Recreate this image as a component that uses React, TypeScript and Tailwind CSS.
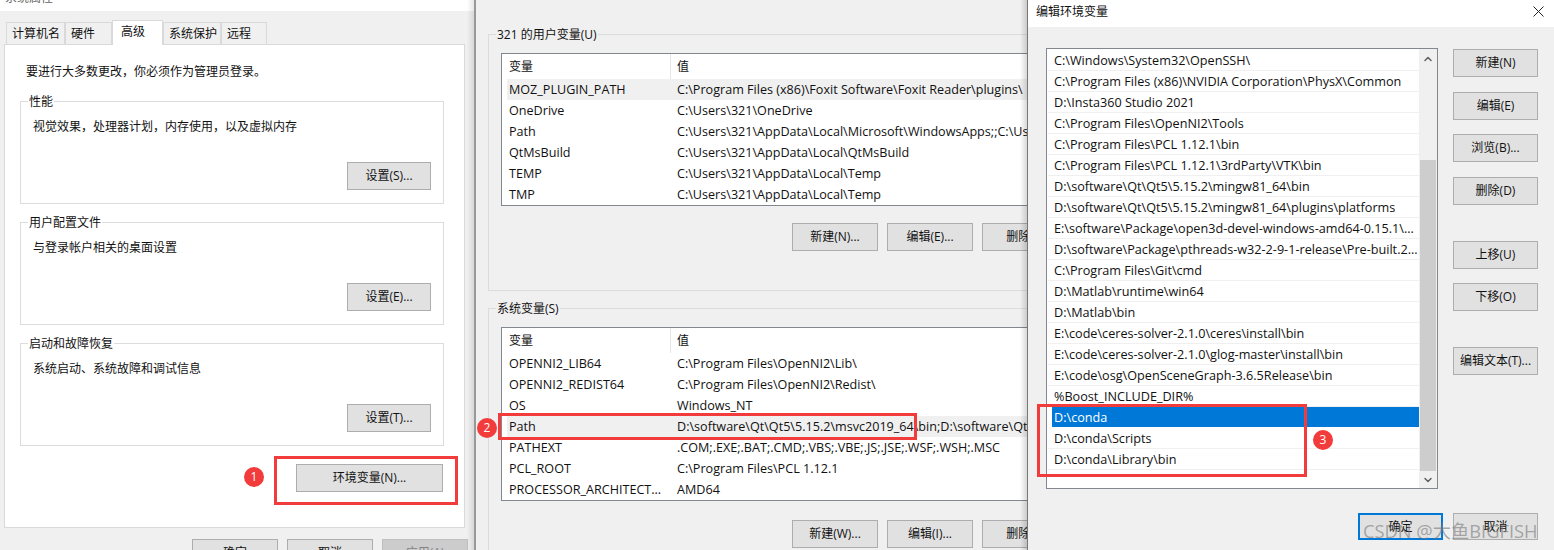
import React from 'react';
import { ChevronDown, ChevronUp } from 'lucide-react';

const Btn = ({ label, className = '' }: { label: string; className?: string }) => (
  <div
    className={`flex shrink-0 items-center justify-center border border-[#adadad] bg-[#e1e1e1] text-[12px] text-[#111] ${className}`}
  >
    {label}
  </div>
);

const Group = ({
  title,
  text,
  button,
}: {
  title: string;
  text: string;
  button: string;
}) => (
  <div className="relative flex h-[103px] flex-col justify-between border border-[#dcdcdc] pt-[16px] pr-[12px] pb-[13px] pl-[12px]">
    <span className="absolute -top-[8px] left-[7px] bg-white px-[1px] text-[12px] leading-[16px]">{title}</span>
    <p className="text-[12px] leading-[18px]">{text}</p>
    <Btn label={button} className="h-[28px] w-[84px] self-end" />
  </div>
);

type VarRow = [string, string];

const VarList = ({ rows, active, bg }: { rows: VarRow[]; active: number; bg: string }) => (
  <div className="w-[560px] border border-r-0 border-[#828790] bg-white pl-[5px]">
    <div className="flex h-[25px] text-[12px]">
      <span className="flex w-[164px] items-center border-r border-[#e5e5e5] pl-[2px]">变量</span>
      <span className="flex items-center pl-[6px]">值</span>
    </div>
    {rows.map(([name, value], i) => (
      <div
        key={name}
        className={`flex h-[21px] items-center whitespace-nowrap pt-[1px] text-[12.6px] leading-[16px] ${i === active ? bg : ''}`}
      >
        <span className="w-[170px] shrink-0 pl-[2px]">{name}</span>
        <span>{value}</span>
      </div>
    ))}
  </div>
);

const userVars: VarRow[] = [
  ['MOZ_PLUGIN_PATH', 'C:\\Program Files (x86)\\Foxit Software\\Foxit Reader\\plugins\\'],
  ['OneDrive', 'C:\\Users\\321\\OneDrive'],
  ['Path', 'C:\\Users\\321\\AppData\\Local\\Microsoft\\WindowsApps;;C:\\Users\\321'],
  ['QtMsBuild', 'C:\\Users\\321\\AppData\\Local\\QtMsBuild'],
  ['TEMP', 'C:\\Users\\321\\AppData\\Local\\Temp'],
  ['TMP', 'C:\\Users\\321\\AppData\\Local\\Temp'],
];

const systemVars: VarRow[] = [
  ['OPENNI2_LIB64', 'C:\\Program Files\\OpenNI2\\Lib\\'],
  ['OPENNI2_REDIST64', 'C:\\Program Files\\OpenNI2\\Redist\\'],
  ['OS', 'Windows_NT'],
  ['Path', 'D:\\software\\Qt\\Qt5\\5.15.2\\msvc2019_64\\bin;D:\\software\\Qt\\Qt5\\5.15'],
  ['PATHEXT', '.COM;.EXE;.BAT;.CMD;.VBS;.VBE;.JS;.JSE;.WSF;.WSH;.MSC'],
  ['PCL_ROOT', 'C:\\Program Files\\PCL 1.12.1'],
  ['PROCESSOR_ARCHITECT...', 'AMD64'],
];

const paths = [
  'C:\\Windows\\System32\\OpenSSH\\',
  'C:\\Program Files (x86)\\NVIDIA Corporation\\PhysX\\Common',
  'D:\\Insta360 Studio 2021',
  'C:\\Program Files\\OpenNI2\\Tools',
  'C:\\Program Files\\PCL 1.12.1\\bin',
  'C:\\Program Files\\PCL 1.12.1\\3rdParty\\VTK\\bin',
  'D:\\software\\Qt\\Qt5\\5.15.2\\mingw81_64\\bin',
  'D:\\software\\Qt\\Qt5\\5.15.2\\mingw81_64\\plugins\\platforms',
  'E:\\software\\Package\\open3d-devel-windows-amd64-0.15.1\\...',
  'D:\\software\\Package\\pthreads-w32-2-9-1-release\\Pre-built.2...',
  'C:\\Program Files\\Git\\cmd',
  'D:\\Matlab\\runtime\\win64',
  'D:\\Matlab\\bin',
  'E:\\code\\ceres-solver-2.1.0\\ceres\\install\\bin',
  'E:\\code\\ceres-solver-2.1.0\\glog-master\\install\\bin',
  'E:\\code\\osg\\OpenSceneGraph-3.6.5Release\\bin',
  '%Boost_INCLUDE_DIR%',
  'D:\\conda',
  'D:\\conda\\Scripts',
  'D:\\conda\\Library\\bin',
];

const tabs = [
  { label: '计算机名', w: 'w-[59px]' },
  { label: '硬件', w: 'w-[47px]' },
  { label: '高级', w: 'w-[51px]', active: true },
  { label: '系统保护', w: 'w-[58px]' },
  { label: '远程', w: 'w-[46px]' },
];

const Marker = ({ n, className }: { n: number; className: string }) => (
  <div
    className={`absolute flex h-[20px] w-[20px] items-center justify-center rounded-full bg-[#f23c3c] text-[12px] text-white ${className}`}
  >
    {n}
  </div>
);

const App = () => {
  return (
    <div className="relative flex h-[550px] w-[1554px] overflow-hidden bg-[#f0f0f0] font-['Open_Sans','Noto_Sans_CJK_SC',sans-serif] text-[#111]">
      {/* 系统属性 */}
      <div className="relative w-[474px] shrink-0">
        <div className="h-[11px] overflow-hidden bg-white pl-[5px]">
          <div className="-mt-[9px] text-[12px] leading-[14px] text-[#666]">系统属性</div>
        </div>
        <div className="mt-[9px] flex h-[24px] items-end pl-[6px] text-[12px]">
          {tabs.map((tab) =>
            tab.active ? (
              <div
                key={tab.label}
                className={`relative z-10 -mb-px flex h-[25px] items-center border border-b-0 border-[#d9d9d9] bg-white pb-[3px] pl-[8px] ${tab.w}`}
              >
                {tab.label}
              </div>
            ) : (
              <div
                key={tab.label}
                className={`flex h-[22px] items-center border border-b-0 border-[#d9d9d9] bg-[#f0f0f0] pl-[5px] ${tab.w}`}
              >
                {tab.label}
              </div>
            ),
          )}
        </div>
        <div className="ml-[4px] flex h-[484px] w-[461px] flex-col border border-[#d9d9d9] bg-white pt-[18px] pr-[20px] pl-[15px]">
          <p className="ml-[6px] text-[12px] leading-[18px]">要进行大多数更改，你必须作为管理员登录。</p>
          <div className="mt-[20px] flex flex-col gap-[18px]">
            <Group title="性能" text="视觉效果，处理器计划，内存使用，以及虚拟内存" button="设置(S)..." />
            <Group title="用户配置文件" text="与登录帐户相关的桌面设置" button="设置(E)..." />
            <Group title="启动和故障恢复" text="系统启动、系统故障和调试信息" button="设置(T)..." />
          </div>
          <Btn label="环境变量(N)..." className="mt-[18px] mr-px h-[28px] w-[147px] self-end" />
        </div>
        <div className="mt-[11px] ml-[192px] flex gap-[9px]">
          <Btn label="确定" className="h-[28px] w-[86px]" />
          <Btn label="取消" className="h-[28px] w-[86px]" />
          <Btn
            label="应用(A)"
            className="h-[28px] w-[86px] !border-[#bfbfbf] !bg-[#cccccc] !text-[#838383]"
          />
        </div>
        <div className="absolute top-0 right-0 bottom-0 w-[7px] bg-linear-to-r from-transparent to-black/10" />
      </div>
      <div className="w-[2px] shrink-0 bg-[#999]" />

      {/* 环境变量 */}
      <div className="relative w-[551px] shrink-0 overflow-hidden pl-[12px]">
        <div className="relative mt-[34px] h-[257px] w-[600px] border border-[#dcdcdc] pt-[18px] pl-[12px]">
          <span className="absolute -top-[8px] left-[7px] bg-[#f0f0f0] px-[1px] text-[12px] leading-[16px]">
            321 的用户变量(U)
          </span>
          <VarList rows={userVars} active={0} bg="bg-[#f0f0f0]" />
          <div className="mt-[17px] ml-[291px] flex gap-[9px]">
            <Btn label="新建(N)..." className="h-[28px] w-[86px]" />
            <Btn label="编辑(E)..." className="h-[28px] w-[86px]" />
            <Btn label="删除(L)" className="h-[28px] w-[86px]" />
          </div>
        </div>
        <div className="relative mt-[17px] h-[260px] w-[600px] border border-[#dcdcdc] pt-[18px] pl-[12px]">
          <span className="absolute -top-[8px] left-[7px] bg-[#f0f0f0] px-[1px] text-[12px] leading-[16px]">
            系统变量(S)
          </span>
          <VarList rows={systemVars} active={3} bg="bg-[#f0f0f0]" />
          <div className="mt-[19px] ml-[291px] flex gap-[9px]">
            <Btn label="新建(W)..." className="h-[28px] w-[86px]" />
            <Btn label="编辑(I)..." className="h-[28px] w-[86px]" />
            <Btn label="删除(L)" className="h-[28px] w-[86px]" />
          </div>
        </div>
        <div className="absolute top-0 right-0 bottom-0 w-[7px] bg-linear-to-r from-transparent to-black/15" />
      </div>

      {/* 编辑环境变量 */}
      <div className="flex min-w-0 flex-1 flex-col border-l border-[#777]">
        <div className="flex h-[27px] shrink-0 items-center justify-between bg-white pr-[10px] pb-[4px] pl-[8px] text-[12px]">
          <span>编辑环境变量</span>
          <svg width="11" height="11" viewBox="0 0 11 11" stroke="#222" strokeWidth="1">
            <path d="M0.5 0.5L10.5 10.5M10.5 0.5L0.5 10.5" />
          </svg>
        </div>
        <div className="flex pt-[21px] pl-[18px]">
          <div className="flex h-[441px] w-[392px] shrink-0 border border-[#828790] bg-white">
            <div className="w-[372px] shrink-0 whitespace-nowrap pt-[1px] text-[12.65px] leading-[16px]">
              {paths.map((p) =>
                p === 'D:\\conda' ? (
                  <div key={p} className="ml-[5px] flex h-[21px] items-center border-b border-white bg-[#0078d7] pl-[2px] text-white">
                    {p}
                  </div>
                ) : (
                  <div key={p} className="ml-px flex h-[21px] items-center border-b border-[#f0f0f0] pl-[6px]">
                    {p}
                  </div>
                ),
              )}
            </div>
            <div className="flex w-[18px] flex-col items-center bg-[#f0f0f0] px-[1px] text-[#606060]">
              <div className="flex h-[20px] items-center">
                <ChevronUp size={12} strokeWidth={3} />
              </div>
              <div className="mt-[91px] h-[311px] w-full bg-[#cdcdcd]" />
              <div className="flex h-[17px] items-center">
                <ChevronDown size={12} strokeWidth={3} />
              </div>
            </div>
          </div>
          <div className="ml-[15px] flex flex-col pt-px">
            <Btn label="新建(N)" className="h-[28px] w-[85px]" />
            <Btn label="编辑(E)" className="mt-[15px] h-[28px] w-[85px]" />
            <Btn label="浏览(B)..." className="mt-[14px] h-[28px] w-[85px]" />
            <Btn label="删除(D)" className="mt-[15px] h-[28px] w-[85px]" />
            <Btn label="上移(U)" className="mt-[36px] h-[28px] w-[85px]" />
            <Btn label="下移(O)" className="mt-[14px] h-[28px] w-[85px]" />
            <Btn label="编辑文本(T)..." className="mt-[36px] h-[28px] w-[85px]" />
          </div>
        </div>
        <div className="mt-[24px] flex justify-end gap-[10px] pr-[16px]">
          <Btn label="确定" className="h-[27px] w-[85px] !border-2 !border-[#0078d7]" />
          <Btn label="取消" className="h-[27px] w-[85px]" />
        </div>
      </div>

      {/* 标注 */}
      <div className="absolute top-[456px] left-[274px] h-[49px] w-[184px] border-[3px] border-[#f23c3c]" />
      <div className="absolute top-[413px] left-[498px] h-[27px] w-[419px] border-[3px] border-[#f23c3c]" />
      <div className="absolute top-[404px] left-[1037px] h-[73px] w-[270px] border-[3px] border-[#f23c3c]" />
      <Marker n={1} className="top-[467px] left-[244px]" />
      <Marker n={2} className="top-[418px] left-[477px]" />
      <Marker n={3} className="top-[430px] left-[1313px]" />
      <div className="absolute top-[519px] left-[1363px] whitespace-nowrap text-[18.3px] leading-[24px] text-[#77777799]">
        CSDN @大鱼BIGFISH
      </div>
    </div>
  );
};

export default App;
